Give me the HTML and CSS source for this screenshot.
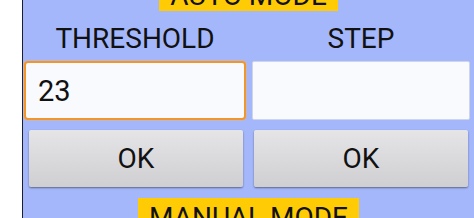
FILE: index.html
```html
<!DOCTYPE html>
<html lang="en">
<head>
    <meta charset="UTF-8">
    <title>Mode settings</title>
    <link rel="stylesheet" href="styles.css">
</head>
<body>
<div class="screen">
    <div class="side"></div>
    <div class="panel">
        <div class="title title_top"><span>AUTO MODE</span></div>
        <div class="grid">
            <div class="label">THRESHOLD</div>
            <div class="label">STEP</div>
            <input class="field field_active" type="text" value="23">
            <input class="field" type="text" value="">
            <button class="btn btn_left">OK</button>
            <button class="btn btn_right">OK</button>
        </div>
        <div class="title title_bottom"><span>MANUAL MODE</span></div>
    </div>
</div>
</body>
</html>
```

FILE: styles.css
```css
body{
    margin: 0;
    background: #fff;
    overflow: hidden;
    font-family: Roboto, "Liberation Sans", sans-serif;
}
.screen{
    display: flex;
    width: 474px;
    height: 218px;
    overflow: hidden;
}
.side{
    width: 22px;
    background: #fff;
}
.panel{
    flex: 1;
    border-left: 1px solid #1c1f2e;
    background: #a4b7fb;
    display: flex;
    flex-direction: column;
}
.title{
    display: flex;
    justify-content: center;
    font-size: 28px;
    line-height: 30px;
    color: #111;
}
.title span{
    display: block;
    background: #ffcb05;
    padding: 5px 11px 0;
}
.title_top{
    margin-top: -24px;
}
.title_bottom{
    margin-top: 11px;
}
.grid{
    display: grid;
    grid-template-columns: 222px 218px;
    column-gap: 6px;
    padding-left: 1px;
    margin-top: 11px;
}
.label{
    text-align: center;
    font-size: 28px;
    line-height: 33px;
    color: #111;
}
.field{
    box-sizing: border-box;
    height: 59px;
    margin-top: 6px;
    padding: 0 12px;
    font-family: Roboto, "Liberation Sans", sans-serif;
    font-size: 29px;
    color: #111;
    background: #f9fafd;
    border: 1px solid #cfd5e8;
    border-radius: 2px;
    outline: none;
}
.field_active{
    border: 2px solid #f2952a;
    border-radius: 4px;
    box-shadow: 0 0 2px #f7b565;
}
.btn{
    height: 57px;
    margin-top: 10px;
    font-family: Roboto, "Liberation Sans", sans-serif;
    font-size: 28px;
    color: #111;
    background: linear-gradient(#e5e5e8, #cfcfd2);
    border: none;
    border-radius: 2px;
    box-shadow: 0 1px 2px rgba(0, 0, 0, 0.45);
}
.btn_left{
    margin-left: 5px;
    margin-right: 3px;
}
.btn_right{
    margin-left: 2px;
    margin-right: 2px;
}
```
